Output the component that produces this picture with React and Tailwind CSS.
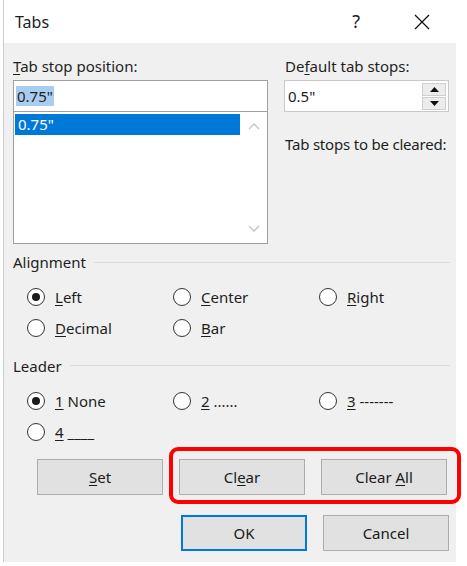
import React from "react";

const font = { fontFamily: '"Noto Sans", "Open Sans", sans-serif' };

const Radio = ({ checked, children, className = "" }) => (
  <label className={`flex items-center gap-[10px] ${className}`}>
    <span className="flex h-[18px] w-[18px] items-center justify-center rounded-full border border-[#333333] bg-white">
      {checked && <span className="h-[8px] w-[8px] rounded-full bg-[#1a1a1a]" />}
    </span>
    <span>{children}</span>
  </label>
);

const Section = ({ title }) => (
  <div className="flex items-center gap-2 pr-[6px]">
    <span>{title}</span>
    <div className="h-px flex-1 bg-[#dcdcdc]" />
  </div>
);

const Btn = ({ children, primary }) => (
  <button
    className={`h-[36px] w-[126px] bg-[#e1e1e1] text-[15px] text-[#1a1a1a] ${
      primary ? "border-2 border-[#0078d7]" : "border border-[#adadad]"
    }`}
  >
    {children}
  </button>
);

export default function App() {
  return (
    <div className="relative h-[566px] w-[467px] bg-white text-[15px] text-[#1e1e1e]" style={font}>
      <div className="ml-[3px] flex h-[562px] w-[453px] flex-col border-l border-[#cccccc]">
        {/* Title bar */}
        <div className="flex h-[43px] items-center bg-white pl-[11px]">
          <span className="text-[16px]">Tabs</span>
          <span className="ml-auto mr-[54px] text-[18px]">?</span>
          <svg width="16" height="16" viewBox="0 0 16 16" className="mr-[26px]">
            <path d="M1 1L15 15M15 1L1 15" stroke="#111" strokeWidth="1.3" />
          </svg>
        </div>

        {/* Body */}
        <div className="flex flex-1 flex-col bg-[#f0f0f0] pl-[9px] pt-[13px]">
          <div className="flex gap-[16px]">
            {/* Left column */}
            <div className="flex w-[255px] flex-col">
              <span className="h-[21px] leading-[21px]">
                <u className="underline-offset-2">T</u>ab stop position:
              </span>
              <div className="mt-[3px] flex h-[32px] items-center border border-[#a0a0a0] bg-white px-[2px]">
                <span className="bg-[#a8cdf0] px-[1px] leading-[20px]">0.75"</span>
              </div>
              <div className="flex h-[132px] border border-t-0 border-[#a0a0a0] bg-white">
                <div className="flex-1 pl-[1px] pt-[2px]">
                  <div className="h-[21px] bg-[#0078d7] pl-[3px] leading-[21px] text-white">0.75"</div>
                </div>
                <div className="flex w-[27px] flex-col items-center justify-between py-[10px]">
                  <svg width="12" height="8" viewBox="0 0 12 8">
                    <path d="M1 7L6 2L11 7" fill="none" stroke="#c4c4c4" strokeWidth="1.3" />
                  </svg>
                  <svg width="12" height="8" viewBox="0 0 12 8">
                    <path d="M1 1L6 6L11 1" fill="none" stroke="#c4c4c4" strokeWidth="1.3" />
                  </svg>
                </div>
              </div>
            </div>

            {/* Right column */}
            <div className="flex w-[165px] flex-col">
              <span className="h-[21px] pl-[1px] leading-[21px]">
                De<u className="underline-offset-2">f</u>ault tab stops:
              </span>
              <div className="mt-[3px] flex h-[32px] items-center border border-[#c8c8c8] bg-white pl-[3px] pr-[2px]">
                <span>0.5"</span>
                <div className="ml-auto flex flex-col gap-[1px]">
                  <div className="flex h-[13px] w-[24px] items-center justify-center border border-[#cfcfcf] bg-[#ececec]">
                    <svg width="9" height="5" viewBox="0 0 9 5">
                      <path d="M0 5L4.5 0L9 5Z" fill="#111" />
                    </svg>
                  </div>
                  <div className="flex h-[13px] w-[24px] items-center justify-center border border-[#cfcfcf] bg-[#ececec]">
                    <svg width="9" height="5" viewBox="0 0 9 5">
                      <path d="M0 0L4.5 5L9 0Z" fill="#111" />
                    </svg>
                  </div>
                </div>
              </div>
              <span className="mt-[21px] whitespace-nowrap pl-[1px] tracking-[-0.2px]">Tab stops to be cleared:</span>
            </div>
          </div>

          {/* Alignment */}
          <div className="mt-[7px]">
            <Section title="Alignment" />
            <div className="mt-[12px] grid grid-cols-[146px_146px_1fr] gap-y-[9px] pl-[14px]">
              <Radio checked>
                <u className="underline-offset-2">L</u>eft
              </Radio>
              <Radio>
                <u className="underline-offset-2">C</u>enter
              </Radio>
              <Radio>
                <u className="underline-offset-2">R</u>ight
              </Radio>
              <Radio>
                <u className="underline-offset-2">D</u>ecimal
              </Radio>
              <Radio>
                <u className="underline-offset-2">B</u>ar
              </Radio>
            </div>
          </div>

          {/* Leader */}
          <div className="mt-[15px]">
            <Section title="Leader" />
            <div className="mt-[13px] grid grid-cols-[146px_146px_1fr] gap-y-[8px] pl-[14px]">
              <Radio checked>
                <u className="underline-offset-2">1</u> None
              </Radio>
              <Radio>
                <u className="underline-offset-2">2</u> ......
              </Radio>
              <Radio>
                <u className="underline-offset-2">3</u> -------
              </Radio>
              <Radio>
                <u className="underline-offset-2">4</u> ____
              </Radio>
            </div>
          </div>

          {/* Buttons */}
          <div className="mt-[16px] flex gap-[16px] pl-[24px]">
            <Btn>
              <u className="underline-offset-2">S</u>et
            </Btn>
            <Btn>
              Cl<u className="underline-offset-2">e</u>ar
            </Btn>
            <Btn>
              Clear <u className="underline-offset-2">A</u>ll
            </Btn>
          </div>
          <div className="mt-[20px] flex justify-end gap-[16px] pr-[7px]">
            <Btn primary>OK</Btn>
            <Btn>Cancel</Btn>
          </div>
        </div>
      </div>

      {/* Highlight box */}
      <div className="absolute left-[169px] top-[447px] h-[57px] w-[292px] rounded-[9px] border-[4px] border-[#ff0000]" />
    </div>
  );
}
